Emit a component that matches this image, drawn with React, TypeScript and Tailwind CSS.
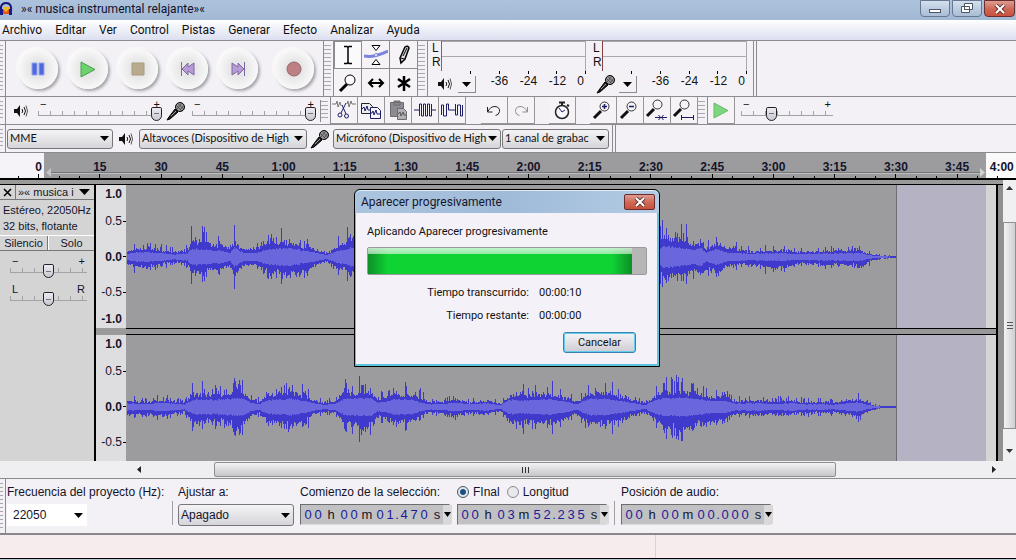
import { useState } from "react";
import type { ReactNode } from "react";

type Point = [x: number, up: number, down: number];

const menus = ["Archivo", "Editar", "Ver", "Control", "Pistas", "Generar", "Efecto", "Analizar", "Ayuda"];

const times = [
  "0", "15", "30", "45", "1:00", "1:15", "1:30", "1:45", "2:00",
  "2:15", "2:30", "2:45", "3:00", "3:15", "3:30", "3:45", "4:00",
];

// envelope of each channel: position, peak above and peak below the zero line
const leftChannel: Point[] = [
  [0, 10, 13], [18, 17, 16], [38, 12, 11], [48, 8, 8], [61, 12, 12], [65, 28, 26], [80, 30, 24],
  [88, 20, 19], [95, 24, 20], [103, 13, 12], [108, 29, 30], [117, 14, 13], [130, 15, 12], [139, 25, 23],
  [155, 29, 28], [163, 28, 30], [176, 21, 23], [188, 15, 15], [200, 6, 6], [208, 16, 19], [218, 25, 20],
  [224, 38, 30], [240, 28, 28], [300, 14, 14], [380, 8, 8], [440, 24, 24], [520, 28, 28], [533, 30, 26],
  [538, 40, 36], [546, 36, 31], [557, 36, 28], [566, 21, 25], [574, 28, 29], [580, 14, 18], [592, 27, 25],
  [600, 17, 14], [613, 14, 12], [623, 10, 12], [633, 11, 15], [653, 12, 17], [673, 10, 10], [693, 11, 13],
  [713, 12, 12], [729, 13, 12], [736, 11, 16], [746, 4, 5], [757, 2, 2], [770, 1, 1],
];

const rightChannel: Point[] = [
  [0, 12, 13], [18, 9, 11], [39, 13, 14], [58, 9, 8], [66, 22, 24], [74, 24, 25], [90, 24, 22],
  [114, 28, 30], [124, 15, 15], [132, 9, 9], [142, 22, 24], [164, 26, 27], [179, 19, 22], [186, 14, 12],
  [198, 6, 7], [209, 11, 10], [217, 26, 24], [231, 28, 32], [244, 29, 32], [252, 14, 15], [269, 24, 25],
  [286, 23, 24], [294, 17, 14], [304, 8, 8], [319, 10, 11], [329, 14, 15], [344, 8, 8], [359, 12, 12],
  [374, 6, 6], [384, 23, 26], [399, 21, 24], [424, 25, 26], [434, 19, 22], [441, 17, 18], [449, 8, 10],
  [462, 25, 28], [479, 28, 27], [494, 19, 22], [509, 13, 12], [519, 6, 7], [529, 21, 22], [539, 30, 34],
  [546, 27, 30], [557, 30, 38], [571, 25, 25], [586, 19, 24], [599, 20, 18], [609, 11, 11], [634, 12, 12],
  [649, 9, 9], [664, 13, 12], [679, 8, 9], [694, 9, 9], [709, 8, 8], [722, 13, 12], [731, 14, 16],
  [739, 9, 9], [749, 3, 3], [756, 1, 1], [770, 1, 1],
];

const noise = (n: number) => {
  const v = Math.sin(n * 12.9898 + 4.1) * 43758.5453;
  return v - Math.floor(v);
};

const buildWave = (points: Point[], seed: number) => {
  let peaks = "";
  let rms = "";
  let i = 0;
  for (let x = 1; x < 770; x++) {
    while (i < points.length - 2 && points[i + 1][0] <= x) i++;
    const [x0, u0, d0] = points[i];
    const [x1, u1, d1] = points[i + 1];
    const t = (x - x0) / (x1 - x0);
    const up = u0 + (u1 - u0) * t;
    const down = d0 + (d1 - d0) * t;
    const spike = Math.pow(noise(x + seed), 4);
    const spikeDown = spike * 0.7 + Math.pow(noise(x * 3 + seed), 3) * 0.3;
    const top = Math.max(1, Math.round(up * (0.4 + 0.16 * noise(x * 7 + seed) + 0.62 * spike)));
    const bottom = Math.max(1, Math.round(down * (0.46 + 0.16 * noise(x * 5 + seed) + 0.6 * spikeDown)));
    peaks += `M${x} ${72 - top}h1V${72 + bottom}h-1z`;
    const core = Math.round(Math.min(up, down) * (0.28 + 0.06 * noise(x * 11)));
    if (core > 0) rms += `M${x} ${72 - core}h1V${72 + core}h-1z`;
  }
  return { peaks, rms };
};

const waves = [buildWave(leftChannel, 17), buildWave(rightChannel, 230)];

const Speaker = () => (
  <svg width="14" height="14" viewBox="0 0 14 14" fill="none" stroke="#111" className="shrink-0">
    <path d="M0 5h3l3-4v12l-3-4h-3z" fill="#111" stroke="none" />
    <path d="M8 5q1.500 2 0 4M10 3q3 4 0 8" />
    <path d="M12 1.500q3 5.500 0 11" stroke="#555" />
  </svg>
);

const Mic = () => (
  <svg width="20" height="20" viewBox="0 0 20 20" className="shrink-0">
    <path d="M1 19l3-1 8-7-3-3-6 8z" fill="#222" stroke="#000" />
    <path d="M5 15l5-5" stroke="#999" />
    <circle cx="14" cy="6" r="4.500" fill="#999" stroke="#000" />
    <path d="M10 4l6 6M12 2.500l6 6M11 8l5-6M14 9l4-5" stroke="#333" strokeWidth=".7" />
  </svg>
);

const Arrow = () => (
  <svg width="9" height="5" viewBox="0 0 9 5" className="shrink-0">
    <path d="M0 0h9L4.500 5z" fill="#000" />
  </svg>
);

const Gripper = ({ className = "w-2" }: { className?: string }) => (
  <div
    className={`${className} shrink-0 self-stretch border-r border-[#8d8b90] bg-[#f3f1f5] bg-[repeating-linear-gradient(#a9a8ad_0_1px,transparent_1px_4px)] bg-clip-content py-1 pr-0.5`}
  ></div>
);

const Slider = ({ label, value, className = "" }: { label: string; value: number; className?: string }) => {
  const [pos, setPos] = useState(value);
  return (
    <input
      type="range"
      aria-label={label}
      min={0}
      max={100}
      value={pos}
      onChange={(e) => setPos(Number(e.currentTarget.value))}
      className={`${className} h-4 appearance-none bg-[linear-gradient(#a3a2a5,#a3a2a5),repeating-linear-gradient(to_right,#a3a2a5_0_1px,transparent_1px_12px)] bg-[length:100%_1px,100%_4px] bg-[position:0_9px,0_5px] bg-no-repeat [&::-webkit-slider-thumb]:h-3.5 [&::-webkit-slider-thumb]:w-[11px] [&::-webkit-slider-thumb]:appearance-none [&::-webkit-slider-thumb]:bg-[linear-gradient(#777,#777),linear-gradient(#eceaf2,#c9c8d0)] [&::-webkit-slider-thumb]:bg-[length:5px_1px,100%_100%] [&::-webkit-slider-thumb]:bg-center [&::-webkit-slider-thumb]:bg-no-repeat [&::-webkit-slider-thumb]:border-[1px] [&::-webkit-slider-thumb]:border-[#222] [&::-webkit-slider-thumb]:rounded-t-[2px] [&::-webkit-slider-thumb]:rounded-b-[6px]`}
    />
  );
};

// slider with its end marks on top
const LabeledSlider = (props: { label: string; value: number; low: string; high: string; className?: string }) => (
  <div className={`${props.className ?? ""} flex flex-col font-['Liberation_Sans',sans-serif] text-[11px] leading-[8px]`}>
    <div className="flex justify-between px-0.5">
      <span>{props.low}</span>
      <span>{props.high}</span>
    </div>
    <Slider label={props.label} value={props.value} className="-mt-0.5 w-full" />
  </div>
);

const Select = ({ label, text, className = "" }: { label: string; text: string; className?: string }) => (
  <div className={`${className} relative shrink-0`}>
    <select
      aria-label={label}
      className="h-full w-full appearance-none overflow-hidden rounded-[3px] border border-[#77767a] bg-linear-to-b from-[#f4f3f5] to-[#d6d5d9] pl-0.5 pr-3 whitespace-nowrap"
    >
      <option>{text}</option>
    </select>
    <span className="pointer-events-none absolute inset-y-0 right-1 flex items-center">
      <Arrow />
    </span>
  </div>
);

const Tool = ({ name, active, children }: { name: string; active?: boolean; children: ReactNode }) => (
  <button
    aria-label={name}
    className={`flex h-7 w-7 items-center justify-center border-r border-b border-[#8d8b90] ${
      active ? "border-t border-l bg-[#faf9fb]" : "bg-[#f5f3f6]"
    }`}
  >
    <svg width="24" height="24" viewBox="0 0 24 24" fill="none" stroke="#000">
      {children}
    </svg>
  </button>
);

const EditButton = ({ name, children }: { name: string; children: ReactNode }) => (
  <button
    aria-label={name}
    className="flex h-[27px] w-[27px] shrink-0 items-center justify-center border-r border-b border-[#98969b] bg-[#f5f3f6]"
  >
    <svg width="24" height="22" viewBox="0 0 24 22" fill="none" stroke="#1d1d66">
      {children}
    </svg>
  </button>
);

const Lens = () => (
  <>
    <path d="M3 19l7-7" stroke="#111" strokeWidth="3" />
    <circle cx="13.500" cy="7.500" r="4.500" fill="#f4f4f8" stroke="#333" />
  </>
);

const Transport = ({ name, children }: { name: string; children: ReactNode }) => (
  <button
    aria-label={name}
    className="flex h-10 w-10 shrink-0 items-center justify-center rounded-full bg-radial from-[#e8e7e8] from-30% to-[#f9f8f9] to-70% shadow-[2px_2px_3px_#a5a4a8,-1px_-1px_3px_#fff]"
  >
    <svg width="20" height="20" viewBox="0 0 20 20">
      {children}
    </svg>
  </button>
);

const Meter = ({ name, color, icon }: { name: string; color: string; icon: ReactNode }) => (
  <div className="flex h-full w-[161px] flex-col pl-1 font-['Liberation_Sans',sans-serif] text-xs">
    <div className="flex h-[30px]">
      <div className="flex w-[9px] flex-col leading-[14px]">
        <span>L</span>
        <span>R</span>
      </div>
      <div className={`mr-[3px] flex flex-1 flex-col border-l ${color}`}>
        <div className="h-4 border border-l-0 border-[#aaa8ad]"></div>
        <div className="flex-1 border-r border-[#aaa8ad]"></div>
      </div>
    </div>
    <div className="mr-[3px] ml-[38px] flex h-[3px] justify-between">
      {[0, 1, 2, 3, 4].map((n) => (
        <i key={n} className="w-px bg-black"></i>
      ))}
    </div>
    <div className="flex items-start">
      <div className="flex h-5 w-[26px] items-center justify-center">{icon}</div>
      <button
        aria-label={name}
        className="mt-0.5 flex h-[17px] w-[18px] items-center justify-center border-r border-b border-[#8d8b90]"
      >
        <Arrow />
      </button>
      <div className="ml-[9px] flex flex-1 text-center leading-[14px]">
        <span className="w-[29px]">-36</span>
        <span className="w-[29px]">-24</span>
        <span className="w-[29px]">-12</span>
        <span className="flex-1">0</span>
      </div>
    </div>
  </div>
);

const Toolbars = () => (
  <div className="border-y border-[#8d8b90] bg-[#f3f1f5]">
    <div className="flex h-[55px]">
      <Gripper className="w-1.5" />
      <div className="flex w-[318px] items-center gap-[10px] border-r border-[#8d8b90] pl-3">
        <Transport name="Pausa">
          <path d="M4 4h5v12H4zM11 4h5v12h-5z" fill="#4f68dd" stroke="#93a3ee" />
        </Transport>
        <Transport name="Reproducir">
          <path d="M3 3l14 7.500L3 18z" fill="#6cd36c" stroke="#4e9b55" />
        </Transport>
        <Transport name="Detener">
          <path d="M4 4h12v12H4z" fill="#b8ab8d" stroke="#a59a80" />
        </Transport>
        <Transport name="Ir al inicio">
          <path d="M3.500 3v14M4 10l6-6v4l6-4v12l-6-4v4z" fill="#b79ad6" stroke="#7c68a0" />
        </Transport>
        <Transport name="Ir al final">
          <path d="M16.500 3v14M16 10l-6-6v4L4 4v12l6-4v4z" fill="#b79ad6" stroke="#7c68a0" />
        </Transport>
        <div className="ml-1.5">
          <Transport name="Grabar">
            <circle cx="10" cy="10" r="7" fill="#bd8083" stroke="#94676b" />
          </Transport>
        </div>
      </div>
      <Gripper className="w-2.5" />
      <div className="grid grid-cols-3">
        <Tool name="Selección" active>
          <path d="M8 3.500h3l1 1 1-1h3M12 4v16M8 20.500h3l1-1 1 1h3" strokeWidth="1.500" />
        </Tool>
        <Tool name="Envolvente">
          <path d="M8 2.500h8l-4 5zM8 21.500h8l-4-5z" fill="#fff" />
          <path d="M0 13q6 1 12-.5T24 8" stroke="#7a84dc" strokeWidth="3" />
          <circle cx="12" cy="12" r="1.500" fill="#fff" stroke="#7a84dc" />
        </Tool>
        <Tool name="Dibujo">
          <path d="M9 20l-1-5 5-11q3-2 4 1l-4 11z" fill="#ddd" strokeWidth="1.500" />
          <path d="M9 15l3 1M11 13l4-8M8.500 19l1 1" />
        </Tool>
        <Tool name="Zoom">
          <path d="M4 20l7-7" strokeWidth="3" />
          <circle cx="14" cy="9" r="5" fill="#fafafa" />
        </Tool>
        <Tool name="Desplazar">
          <path d="M5 12h14M9 8l-4 4 4 4M15 8l4 4-4 4" strokeWidth="2" />
        </Tool>
        <Tool name="Multiherramienta">
          <path d="M12 5v15M6 8l12 8M18 8L6 16" strokeWidth="2.500" />
        </Tool>
      </div>
      <Gripper className="w-2.5" />
      <Meter name="Nivel de reproducción" color="border-[#3f8a4c]" icon={<Speaker />} />
      <Meter name="Nivel de grabación" color="border-[#8a3f3f]" icon={<Mic />} />
      <div className="w-1 border-r border-[#8d8b90]"></div>
      <div className="w-[3px] border-r border-[#8d8b90]"></div>
    </div>

    <div className="flex h-7 items-center border-t border-[#8d8b90]">
      <Gripper className="w-1.5" />
      <div className="flex w-[315px] items-center border-r border-[#8d8b90] pl-2">
        <Speaker />
        <LabeledSlider label="Volumen de reproducción" value={100} low="−" high="+" className="ml-2.5 w-[124px]" />
        <div className="mr-1.5 ml-1">
          <Mic />
        </div>
        <LabeledSlider label="Volumen de grabación" value={100} low="−" high="+" className="w-[124px]" />
      </div>
      <Gripper className="w-2.5" />
      <EditButton name="Cortar">
        <path d="M0 5h4l1-3 1 6 2-5 1 4M15 5l1-3 1 6 2-6 1 3h4" stroke="#777" />
        <path d="M14 4L9 14M10 6l4 9" />
        <circle cx="8" cy="16" r="2" />
        <circle cx="14.500" cy="17" r="2" />
      </EditButton>
      <EditButton name="Copiar">
        <path d="M2.500 4.500h8l3 3v7h-11z" fill="#eee" stroke="#222" />
        <path d="M3 10l2-2 1 4 2-5 1 4h2" />
        <path d="M11.500 8.500h7l3 3v8h-10z" fill="#f6f6ff" />
        <path d="M12 14h1l1-2 1 4 2-5 1 4h3" />
      </EditButton>
      <EditButton name="Pegar">
        <path d="M4.500 3.500h13v14h-13zM8 2h6v4H8z" fill="#8c8c90" stroke="#6c6c70" />
        <path d="M11.500 9.500h6l3 3v8h-9z" fill="#b0b0b4" stroke="#6c6c70" />
        <path d="M12 15l2-2 1 4 2-4 1 3h2" stroke="#555" />
      </EditButton>
      <EditButton name="Recortar">
        <path d="M1 11h5M18 11h5M6.500 5v12M8.500 5v12M10.500 5v12M12.500 5v12M14.500 5v12M16.500 5v12M18.500 5v12" />
        <path d="M6.500 5h2M10.500 5h2M14.500 5h2M8.500 17h2M12.500 17h2M16.500 17h2" />
      </EditButton>
      <EditButton name="Silenciar">
        <path d="M1.500 16V6h2v11h3V5h2v6h7M15.500 16V5M15.500 16h2V6h3v11h2V6" />
      </EditButton>
      <div className="ml-[15px] flex">
        <EditButton name="Deshacer">
          <path d="M5.500 8v5h5M6 12.500q2-5 7-5 5 .5 4.500 5-.5 3.500-4 4" stroke="#222" />
        </EditButton>
        <EditButton name="Rehacer">
          <path d="M18.500 8v5h-5M18 12.500q-2-5-7-5-5 .5-4.500 5 .5 3.500 4 4" stroke="#8e8d92" />
        </EditButton>
      </div>
      <div className="ml-[14px]">
        <EditButton name="Bloqueo de sincronización">
          <circle cx="12" cy="13" r="6.500" fill="#f8f8ff" stroke="#222" strokeWidth="1.500" />
          <path d="M9 3.500h6M12 4v3M17 6l2 1" stroke="#222" strokeWidth="2" />
          <path d="M9 9l3 4 3-2" />
        </EditButton>
      </div>
      <div className="ml-[14px] flex">
        <EditButton name="Acercar">
          <Lens />
          <path d="M11 7.500h5M13.500 5v5" strokeWidth="1.500" />
        </EditButton>
        <EditButton name="Alejar">
          <Lens />
          <path d="M11 7.500h5" strokeWidth="1.500" />
        </EditButton>
        <EditButton name="Ajustar selección">
          <g transform="translate(-1 -2)">
            <Lens />
          </g>
          <path d="M10 18.500h12M13.500 16l2 2.500-2 2.500M18.500 16l-2 2.500 2 2.500" />
        </EditButton>
        <EditButton name="Ajustar proyecto">
          <g transform="translate(-1 -2)">
            <Lens />
          </g>
          <path d="M9.500 18.500h12M9.500 16v5M21.500 16v5" />
        </EditButton>
      </div>
      <Gripper className="w-2.5" />
      <EditButton name="Reproducir a velocidad">
        <path d="M5 4l14 7.500L5 19z" fill="#7ed67f" stroke="#6cb671" />
      </EditButton>
      <LabeledSlider label="Velocidad de reproducción" value={31} low="−" high="+" className="ml-1.5 w-[92px]" />
    </div>

    <div className="flex h-7 items-center border-t border-[#8d8b90] font-['Lato',sans-serif] text-[11px]">
      <Gripper className="w-1.5" />
      <Select label="Sistema de audio" text="MME" className="ml-px h-5 w-[106px]" />
      <div className="mx-1.5">
        <Speaker />
      </div>
      <Select label="Dispositivo de salida" text="Altavoces (Dispositivo de High" className="h-5 w-[168px]" />
      <div className="mx-[3px]">
        <Mic />
      </div>
      <Select label="Dispositivo de entrada" text="Micrófono (Dispositivo de High" className="h-5 w-[168px]" />
      <Select label="Canales de grabación" text="1 canal de grabac" className="ml-px h-5 w-[107px]" />
      <div className="w-1 self-stretch border-r border-[#8d8b90]"></div>
      <div className="w-[3px] self-stretch border-r border-[#8d8b90]"></div>
    </div>
  </div>
);

const Timeline = () => (
  <div className="flex h-[27px] flex-col overflow-hidden border-b-2 border-black bg-[linear-gradient(to_right,#f5f3f7_44px,#9c9c9e_44px,#9c9c9e_calc(100%-30px),#fafafa_calc(100%-30px))] pt-2">
    <div className="-mr-[33px] ml-2 flex h-3 font-['Liberation_Sans',sans-serif] text-xs leading-[13px] font-bold text-[#14142a]">
      {times.map((time) => (
        <span key={time} className="w-0 flex-1 text-center last:indent-0.5 last:text-left">
          {time}
        </span>
      ))}
    </div>
    <div className="-my-[5px] mr-[31px] ml-[46px] flex h-[9px] items-center">
      <svg width="5" height="9" viewBox="0 0 5 9">
        <path d="M5 0v9L0 4.500z" fill="#c4c4c4" />
      </svg>
      <div className="h-0.5 flex-1 border-t border-[#77777a] bg-[#bdbdbd]"></div>
      <svg width="5" height="9" viewBox="0 0 5 9">
        <path d="M0 0v9l5-4.500z" fill="#d0d0d0" />
      </svg>
    </div>
    <div className="-mr-[33px] ml-2 flex flex-1 items-end">
      {times.map((time) => (
        <div key={time} className="flex flex-1 items-end justify-around">
          <i className="h-0.5 w-px bg-black"></i>
          <i className="h-1 w-px bg-black"></i>
          <i className="h-0.5 w-px bg-black"></i>
        </div>
      ))}
    </div>
  </div>
);

const TrackPanel = () => (
  <div className="w-24 shrink-0 border-r-2 border-black bg-[#d4d4d5] font-['Liberation_Sans',sans-serif] text-[11px] leading-4 text-[#14142a]">
    <div className="flex h-[15px] items-center border-b border-[#77777a]">
      <button
        aria-label="Cerrar pista"
        className="flex h-full w-4 shrink-0 items-center justify-center border-r border-[#77777a]"
      >
        <svg width="9" height="9" viewBox="0 0 9 9" stroke="#000" strokeWidth="1.500">
          <path d="M1 1l7 7M8 1L1 8" />
        </svg>
      </button>
      <button className="flex flex-1 items-center justify-between pr-1 pl-0.5">
        <span>»« musica i</span>
        <svg width="11" height="6" viewBox="0 0 11 6">
          <path d="M0 0h11L5.500 6z" />
        </svg>
      </button>
    </div>
    <div className="flex h-[35px] flex-col justify-center pl-[3px]">
      <span>Estéreo, 22050Hz</span>
      <span>32 bits, flotante</span>
    </div>
    <div className="flex h-4 border-y border-t-white border-b-[#77777a]">
      <button className="w-12 border-r border-[#77777a] leading-[14px]">Silencio</button>
      <button className="flex-1 border-l border-white leading-[14px]">Solo</button>
    </div>
    <LabeledSlider label="Ganancia" value={50} low="−" high="+" className="mt-1.5 ml-2.5 w-[77px]" />
    <LabeledSlider label="Panorámica" value={50} low="L" high="R" className="mt-1.5 ml-2.5 w-[77px]" />
  </div>
);

const ScaleMark = ({ text, tall, end }: { text: string; tall: string; end?: boolean }) => (
  <div className={`${tall} flex shrink-0 items-center justify-end ${text === "0.0" || end ? "font-bold" : ""}`}>
    <span>{text}</span>
    <i className={`ml-px w-[3px] ${end ? "h-0" : "h-px bg-black"}`}></i>
  </div>
);

const Channel = ({ index }: { index: number }) => (
  <div className={`flex min-h-0 overflow-hidden ${index === 0 ? "h-[143px] shrink-0" : "flex-1"}`}>
    <div className="w-[30px] shrink-0 bg-[#dedee0] font-['Liberation_Sans',sans-serif] text-xs text-[#14142a]">
      <ScaleMark text="1.0" tall="h-[18px]" end />
      <ScaleMark text="0.5" tall="h-9" />
      <ScaleMark text="0.0" tall="h-[35px]" />
      <ScaleMark text="-0.5" tall="h-9" />
      {index === 0 && <ScaleMark text="-1.0" tall="h-[18px]" end />}
    </div>
    <div className="flex flex-1 border-r border-[#6d6d74] bg-[#9c9c9f]">
      <svg viewBox="0 0 770 143" preserveAspectRatio="none" shapeRendering="crispEdges" className="h-[143px] w-full">
        <path d={waves[index].peaks} fill="#3f3acb" />
        <path d={waves[index].rms} fill="#6a67dc" />
      </svg>
    </div>
    <div className="w-[89px] shrink-0 bg-[#b4b2c3]"></div>
    <div className="w-2.5 shrink-0 bg-[#d5d5d6]"></div>
  </div>
);

const ProgressDialog = () => (
  <div
    role="dialog"
    aria-label="Aparecer progresivamente"
    className="absolute top-[9px] left-1/2 w-[306px] -translate-x-[154px] rounded-t-md border border-black bg-[#5fc4de] font-['Roboto',sans-serif] text-[11px]"
  >
    <div className="flex h-[23px] items-center justify-between rounded-t-md border-t border-white/70 bg-linear-to-r from-[#abc4df] via-[#9fbbd8] to-[#b3cbe4] pr-1 pl-1.5 text-xs text-[#15152c]">
      <span>Aparecer progresivamente</span>
      <button
        aria-label="Cerrar"
        className="flex h-4 w-[31px] items-center justify-center rounded-xs border border-[#6b2c2c] bg-linear-to-b from-[#dd9d92] via-[#cf6a58] via-50% to-[#c9503c]"
      >
        <svg width="12" height="10" viewBox="0 0 12 10">
          <path d="M2 1l8 8M10 1L2 9" stroke="#633" strokeWidth="4" />
          <path d="M2 1l8 8M10 1L2 9" stroke="#fff" strokeWidth="2" />
        </svg>
      </button>
    </div>
    <div className="mr-0.5 mb-0.5 ml-px h-[151px] bg-[#f4f1f8] px-[11px] pt-[11px]">
      <p className="h-[23px] leading-4">Aplicando Aparecer progresivamente</p>
      <div
        role="progressbar"
        aria-valuenow={94}
        className="h-7 w-[280px] rounded-xs border border-[#9a9a9a] bg-linear-to-r from-[#dedede] to-[#b5b5b5]"
      >
        <div className="h-full w-[95%] bg-[linear-gradient(rgba(255,255,255,.75),rgba(255,255,255,.55)_6px,transparent_6px),linear-gradient(to_right,#0d8f27,#0fd233_20px,#0fd233_calc(100%-20px),#0d8f27)]"></div>
      </div>
      <dl className="mt-1.5 grid grid-cols-[162px_1fr] gap-x-[10px] leading-[23px]">
        <dt className="text-right">Tiempo transcurrido:</dt>
        <dd>00:00:10</dd>
        <dt className="text-right">Tiempo restante:</dt>
        <dd>00:00:00</dd>
      </dl>
      <div className="mt-[5px] flex justify-end pr-2.5">
        <button className="h-[21px] w-[73px] rounded-[3px] border border-[#3c7fb1] bg-linear-to-b from-[#f4f3f6] to-[#cfcdd4] pt-px shadow-[inset_0_0_0_1px_#62cdec]">
          Cancelar
        </button>
      </div>
    </div>
  </div>
);

const Tracks = () => (
  <div className="relative flex h-[281px]">
    <div className="flex flex-1 flex-col bg-[#9a9a9a] pt-1">
      <div className="flex min-h-0 flex-1 border-t border-black">
        <TrackPanel />
        <div className="flex min-h-0 flex-1 flex-col border-r-2 border-black">
          <Channel index={0} />
          <div className="ml-[30px] h-[7px] shrink-0 border-y border-black bg-[#98989a]"></div>
          <Channel index={1} />
        </div>
        <div className="w-[5px] bg-[#8f8f90]"></div>
      </div>
    </div>
    <div className="flex w-[13px] flex-col items-center bg-[#f0eff1]">
      <div className="flex h-[42px] pt-1.5">
        <svg width="7" height="4" viewBox="0 0 7 4">
          <path d="M0 4h7L3.500 0z" fill="#333" />
        </svg>
      </div>
      <div className="flex h-[207px] w-full flex-col items-center justify-center gap-0.5 border border-[#8f8f92] bg-linear-to-r from-[#f3f3f4] to-[#cfcfd2]">
        <i className="h-px w-1.5 bg-[#555]"></i>
        <i className="h-px w-1.5 bg-[#555]"></i>
        <i className="h-px w-1.5 bg-[#555]"></i>
      </div>
      <svg width="7" height="4" viewBox="0 0 7 4" className="mt-5">
        <path d="M0 0h7L3.500 4z" fill="#333" />
      </svg>
    </div>
    <ProgressDialog />
  </div>
);

const HorizontalScroll = () => (
  <div className="flex h-[18px] items-center border-b border-[#8d8b90] bg-[#efeef1] pr-5 pl-[137px]">
    <svg width="4" height="7" viewBox="0 0 4 7">
      <path d="M4 0v7L0 3.500z" fill="#222" />
    </svg>
    <div className="ml-[73px] flex h-[15px] w-[622px] items-center justify-center gap-0.5 rounded-xs border border-[#8f8f92] bg-linear-to-b from-[#f3f3f4] to-[#c6c6c9]">
      <i className="h-1.5 w-px bg-[#333]"></i>
      <i className="h-1.5 w-px bg-[#333]"></i>
      <i className="h-1.5 w-px bg-[#333]"></i>
    </div>
    <svg width="4" height="7" viewBox="0 0 4 7" className="ml-auto">
      <path d="M0 0v7l4-3.500z" fill="#222" />
    </svg>
  </div>
);

const TimeField = ({ label, value }: { label: string; value: string }) => (
  <div
    role="group"
    aria-label={label}
    className="flex h-[21px] w-[150px] items-center border border-t-[#6d6d70] border-l-[#6d6d70] border-[#dcdcdc] bg-[#c1c1c3] pl-0.5 text-[13px]"
  >
    <div className="flex flex-1">
      {value.split("").map((char, i) => {
        if (char === " ") return <span key={i} className="w-0.5"></span>;
        if (char === ".") return <span key={i} className="w-1 text-center text-[#1b1b9c]">.</span>;
        if (/\d/.test(char)) return <span key={i} className="w-[10px] text-center text-[#1b1b9c]">{char}</span>;
        return <span key={i} className="w-3 text-center">{char}</span>;
      })}
    </div>
    <button aria-label="Formato" className="flex h-full w-[9px] shrink-0 items-center justify-center bg-[#d9d9da]">
      <svg width="7" height="5" viewBox="0 0 7 5">
        <path d="M0 0h7L3.500 5z" />
      </svg>
    </button>
  </div>
);

const SelectionBar = () => {
  const [rate, setRate] = useState("22050");
  const [mode, setMode] = useState("final");
  return (
    <div className="flex h-14 border-b-2 border-[#8a888c] bg-[#f3f1f5] font-['Liberation_Sans',sans-serif] text-xs text-[#14142a]">
      <Gripper className="w-1.5" />
      <div className="my-[5px] flex w-[166px] flex-col gap-1 pl-px">
        <label htmlFor="rate" className="h-4 leading-4">
          Frecuencia del proyecto (Hz):
        </label>
        <div className="flex h-[22px] w-20 items-center bg-white pr-1">
          <input
            id="rate"
            value={rate}
            onChange={(e) => setRate(e.currentTarget.value)}
            className="w-0 flex-1 pl-1.5 outline-none"
          />
          <Arrow />
        </div>
      </div>
      <div className="mt-[22px] mb-2 w-px bg-[#a2a1a5]"></div>
      <div className="my-[5px] ml-[5px] flex w-[122px] flex-col gap-1">
        <span className="h-4 leading-4">Ajustar a:</span>
        <Select label="Ajustar a" text="Apagado" className="h-[22px] w-[116px]" />
      </div>
      <div className="my-[5px] flex w-[157px] flex-col gap-1">
        <span className="h-4 leading-4">Comienzo de la selección:</span>
        <TimeField label="Comienzo de la selección" value="00 h 00 m 01.470 s" />
      </div>
      <div className="my-[5px] flex w-[157px] flex-col gap-1">
        <div className="flex h-4 items-center gap-[7px] leading-4">
          {[
            ["final", "FInal"],
            ["longitud", "Longitud"],
          ].map(([id, text]) => (
            <label key={id} className="flex items-center gap-1">
              <input
                type="radio"
                name="mode"
                checked={mode === id}
                onChange={() => setMode(id)}
                className="h-3 w-3 appearance-none rounded-full border border-[#8b8b90] bg-[#e9e9ec] checked:border-[#456] checked:bg-[radial-gradient(#1d4f7c_35%,#dfe6ee_50%)]"
              />
              {text}
            </label>
          ))}
        </div>
        <TimeField label="Final de la selección" value="00 h 03 m 52.235 s" />
      </div>
      <div className="mt-[22px] mb-2 w-px bg-[#a2a1a5]"></div>
      <div className="my-[5px] ml-1.5 flex flex-col gap-1">
        <span className="h-4 leading-4">Posición de audio:</span>
        <TimeField label="Posición de audio" value="00 h 00 m 00.000 s" />
      </div>
    </div>
  );
};

const TitleBar = () => (
  <header className="flex h-5 items-start justify-between bg-linear-to-b from-[#adc2dc] to-[#a2b9d5] font-['Roboto',sans-serif] text-xs text-[#10102a]">
    <div className="flex items-center">
      <svg width="13" height="16" viewBox="0 0 13 16">
        <path d="M1 10Q0 2 6 2t5 8" fill="none" stroke="#16167c" strokeWidth="2" />
        <path d="M3 6h6v6H3z" fill="#f5b81c" />
        <path d="M3 8l3 3 3-3v5H3z" fill="#e4571b" />
        <path d="M0 8h3v6H0zM9 8h3v6H9z" fill="#1b1b8c" />
      </svg>
      <h1 className="pl-2 leading-[18px]">»« musica instrumental relajante»«</h1>
    </div>
    <div className="flex gap-0.5 pr-px">
      <button
        aria-label="Minimizar"
        className="flex h-[17px] w-[30px] items-center justify-center rounded-b-sm border border-[#65788f] bg-linear-to-b from-[#d3dfed] to-[#a9bdd4]"
      >
        <i className="mt-1 h-1 w-3 border border-[#4a5666] bg-white"></i>
      </button>
      <button
        aria-label="Restaurar"
        className="flex h-[17px] w-[30px] items-center justify-center rounded-b-sm border border-[#65788f] bg-linear-to-b from-[#d3dfed] to-[#a9bdd4]"
      >
        <svg width="12" height="11" viewBox="0 0 12 11" fill="#fff" stroke="#4a5666">
          <path d="M3.500.5h8v6h-8zM.5 3.500h8v6h-8zM3 6.500h3" />
        </svg>
      </button>
      <button
        aria-label="Cerrar ventana"
        className="flex h-[17px] w-[31px] items-center justify-center rounded-b-sm border border-[#6b2c2c] bg-linear-to-b from-[#dd9d92] via-[#cf6a58] via-50% to-[#c9503c]"
      >
        <svg width="12" height="10" viewBox="0 0 12 10">
          <path d="M2 1l8 8M10 1L2 9" stroke="#633" strokeWidth="4" />
          <path d="M2 1l8 8M10 1L2 9" stroke="#fff" strokeWidth="2" />
        </svg>
      </button>
    </div>
  </header>
);

const App = () => {
  return (
    <div className="flex min-h-screen flex-col overflow-hidden bg-[#f3f1f5] text-[#111]">
      <TitleBar />
      <nav className="flex h-5 gap-[13px] bg-linear-to-b from-white to-[#dcdff0] pl-0.5 font-['Roboto',sans-serif] text-xs leading-5">
        {menus.map((menu) => (
          <button key={menu}>{menu}</button>
        ))}
      </nav>
      <Toolbars />
      <Timeline />
      <Tracks />
      <HorizontalScroll />
      <SelectionBar />
      <footer className="flex h-[23px] bg-[#f6ecee]">
        <div className="flex-1 border-r border-[#dccfd3]"></div>
        <div className="w-[360px]"></div>
      </footer>
      <div className="flex flex-1 border-t border-black bg-[#b9c4d2]"></div>
    </div>
  );
};

export default App;
